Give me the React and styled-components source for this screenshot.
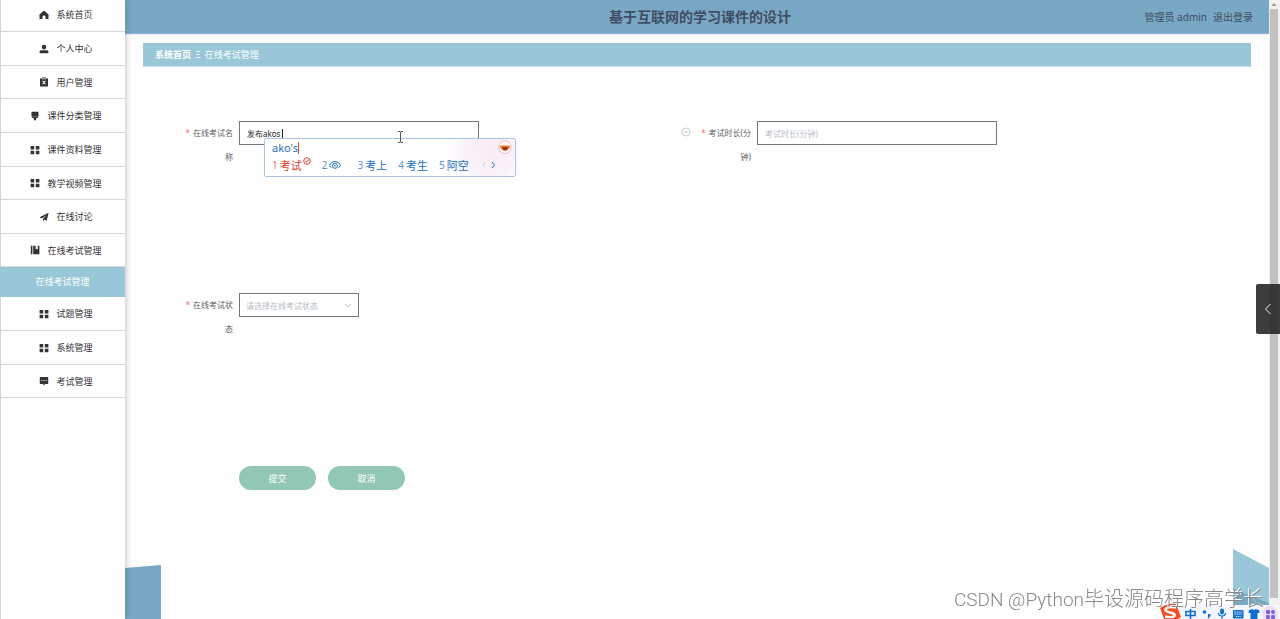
import React, { useState } from 'react';
import styled, { createGlobalStyle } from 'styled-components';

const menuTop = [
  { id: 1, icon: 'home', label: '系统首页' },
  { id: 2, icon: 'user', label: '个人中心' },
  { id: 3, icon: 'clipboard', label: '用户管理' },
  { id: 4, icon: 'brush', label: '课件分类管理' },
  { id: 5, icon: 'grid', label: '课件资料管理' },
  { id: 6, icon: 'grid', label: '教学视频管理' },
  { id: 7, icon: 'plane', label: '在线讨论' },
  { id: 8, icon: 'book', label: '在线考试管理' },
];

const menuBottom = [
  { id: 9, icon: 'grid', label: '试题管理' },
  { id: 10, icon: 'grid', label: '系统管理' },
  { id: 11, icon: 'chat', label: '考试管理' },
];

const iconPaths = {
  home: 'M5 0.8 Q5.600 0.8 6 1.2 L9.5 4.5 V9 H6.5 V6.500 Q6.500 5.500 5 5.500 Q3.500 5.500 3.500 6.500 V9 H0.5 V4.5 L4 1.2 Q4.400 0.8 5 0.8 Z',
  user: 'M5 0.8 a2.3 2.3 0 0 1 0 4.6 a2.3 2.3 0 0 1 0 -4.6 Z M0.6 9.2 V7.6 Q0.6 6.2 2.2 6.2 H7.8 Q9.4 6.2 9.4 7.6 V9.2 Z',
  clipboard: 'M1 1.5 H3 V0.5 H7 V1.5 H9 V9.5 H1 Z M3 2.2 H7 V1.4 H3 Z M3.2 4.2 L4.4 5.5 L3.2 6.9 L3.9 7.5 L5 6.2 L6.1 7.5 L6.8 6.9 L5.6 5.5 L6.8 4.2 L6.1 3.6 L5 4.8 L3.9 3.6 Z',
  brush: 'M1.5 0.8 H8.5 V5.2 H1.5 Z M1.5 5.6 H8.5 L7.6 7 H6.2 V9.3 H3.8 V7 H2.4 Z',
  grid: 'M0.6 1 H4.2 V4.4 H0.6 Z M5.8 1 H9.4 V4.4 H5.8 Z M0.6 5.8 H4.2 V9.2 H0.6 Z M5.8 5.8 H9.4 V9.2 H5.8 Z',
  plane: 'M9.6 0.8 L0.5 5.3 L3 6.4 L7.6 3 L4 6.9 V9.4 L5.4 7.6 L7.7 8.7 Z',
  book: 'M0.8 0.8 H2.4 V9.2 H0.8 Z M3.2 0.8 H5.6 V4.6 L6.7 3.7 L7.8 4.6 V0.8 H9.4 V9.2 H3.2 Z',
  chat: 'M0.8 1 H9.2 V8 H6 L5 9.4 L4 8 H0.8 Z M2.4 4 V5 H3.4 V4 Z M4.5 4 V5 H5.5 V4 Z M6.6 4 V5 H7.6 V4 Z',
};

const candidates = ['考上', '考生', '阿空'];

const MenuIcon = ({ name }) => (
  <Glyph viewBox="0 0 10 10" aria-hidden="true">
    <path d={iconPaths[name]} fillRule="evenodd" />
  </Glyph>
);

const Menu = ({ items }) => (
  <MenuList>
    {items.map((item) => (
      <li key={item.id}>
        <MenuLink href="#">
          <MenuIcon name={item.icon} />
          {item.label}
        </MenuLink>
      </li>
    ))}
  </MenuList>
);

const ImePanel = () => (
  <ImeBox>
    <ImeTyped>ako's<ImeCaret /></ImeTyped>
    <Mascot viewBox="0 0 14 14" aria-hidden="true">
      <path d="M7 0.6 Q10 0.6 11.5 3.4 Q13.4 5 13 8 Q12.2 13.4 7 13.4 Q1.8 13.4 1 8 Q0.6 5 2.5 3.4 Q4 0.6 7 0.6 Z" fill="#fff" stroke="#e3a9ad" strokeWidth="0.8" />
      <path d="M2.2 5.6 H11.8 V7.6 Q11.8 8.6 10.4 9 Q9.4 11 7 11 Q4.600 11 3.6 9 Q2.2 8.6 2.2 7.6 Z" fill="#ee7a22" />
      <path d="M4.6 7.2 H9.4 V8.4 Q9.4 9.8 7 9.8 Q4.6 9.8 4.6 8.4 Z" fill="#6b2c22" />
    </Mascot>
    <ImeList>
      <Candidate $first>
        <small>1</small>考试
        <Tick viewBox="0 0 8 8" aria-hidden="true">
          <circle cx="4" cy="4" r="3.3" />
          <path d="M2.4 4 L3.7 5.3 L5.8 2.7" />
        </Tick>
      </Candidate>
      <Candidate $wide>
        <small>2</small>
        <Eye viewBox="0 0 12 10" aria-hidden="true">
          <path d="M2.6 7.4 Q0.6 6.6 0.6 5.2 Q2.4 1.4 6 1.4 Q9.6 1.4 11.4 5.2 Q11.4 6.6 9.4 7.4" />
          <circle cx="6" cy="5.8" r="2.5" />
          <circle cx="6" cy="5.8" r="0.4" />
        </Eye>
      </Candidate>
      {candidates.map((word, i) => (
        <Candidate key={word}><small>{i + 3}</small>{word}</Candidate>
      ))}
      <Pager viewBox="0 0 14 8" aria-hidden="true">
        <path d="M3 1.5 L1 4 L3 6.5" stroke="#c9d6e4" />
        <path d="M10 1 L12.5 4 L10 7" stroke="#2a6fb5" />
      </Pager>
    </ImeList>
  </ImeBox>
);

const App = () => {
  const [name, setName] = useState('发布akos');
  const [duration, setDuration] = useState('');

  return (
    <Page>
      <GlobalStyle />
      <Sidebar>
        <Menu items={menuTop} />
        <ActiveLink href="#">在线考试管理</ActiveLink>
        <Menu items={menuBottom} />
      </Sidebar>

      <Main>
        <Header>
          <Title>基于互联网的学习课件的设计</Title>
          <Account>
            <span>管理员 admin</span>
            <a href="#">退出登录</a>
          </Account>
        </Header>

        <Content>
          <Breadcrumb>
            <a href="#">系统首页</a>
            <span>Ξ</span>
            <span>在线考试管理</span>
          </Breadcrumb>

          <Form onSubmit={(e) => e.preventDefault()}>
            <Field>
              <Label htmlFor="exam-name">在线考试名称</Label>
              <Control>
                <Input id="exam-name" value={name} onChange={(e) => setName(e.target.value)} />
                <TextCaret />
                <Beam viewBox="0 0 7 12" aria-hidden="true">
                  <path d="M1 0.5 H3 L3.5 1 L4 0.5 H6 M3.5 1 V11 M1 11.5 H3 L3.5 11 L4 11.5 H6" />
                </Beam>
                <ImePanel />
              </Control>
              <ClearIcon viewBox="0 0 10 10" aria-hidden="true">
                <circle cx="5" cy="5" r="4" />
                <path d="M3.6 3.6 L6.4 6.4 M6.4 3.6 L3.6 6.4" />
              </ClearIcon>
            </Field>
            <Field>
              <Label htmlFor="exam-time">考试时长(分钟)</Label>
              <Control>
                <Input
                  id="exam-time"
                  placeholder="考试时长(分钟)"
                  value={duration}
                  onChange={(e) => setDuration(e.target.value)}
                />
              </Control>
            </Field>
            <Field $full>
              <Label htmlFor="exam-state">在线考试状态</Label>
              <SelectBox>
                <Select id="exam-state" defaultValue="">
                  <option value="">请选择在线考试状态</option>
                </Select>
                <Arrow viewBox="0 0 8 5" aria-hidden="true">
                  <path d="M0.8 0.8 L4 4 L7.2 0.8" />
                </Arrow>
              </SelectBox>
            </Field>
            <Actions>
              <Button type="submit">提交</Button>
              <Button type="button">取消</Button>
            </Actions>
          </Form>
        </Content>

        <LeftShape viewBox="0 0 36 54" aria-hidden="true">
          <path d="M0 3 L36 0 V54 H0 Z" fill="#78a8c3" />
        </LeftShape>
        <RightShape viewBox="0 0 36 60" aria-hidden="true">
          <path d="M0 0 L36 19 V60 H0 Z" fill="#99c7d7" />
          <path d="M0 40 L36 54 V60 H0 Z" fill="#78a8c3" />
        </RightShape>
      </Main>

      <Scrollbar>
        <ScrollArrow viewBox="0 0 8 9" aria-hidden="true">
          <path d="M1.5 6 L4 3 L6.5 6 Z" />
        </ScrollArrow>
        <Thumb />
      </Scrollbar>

      <Drawer type="button" aria-label="展开">
        <svg viewBox="0 0 8 12" aria-hidden="true">
          <path d="M6.5 1 L1.5 6 L6.5 11" />
        </svg>
      </Drawer>

      <Tray>
        <svg viewBox="0 0 120 16" aria-hidden="true">
          <rect x="18" y="2" width="102" height="14" fill="#f3f6fc" />
          <circle cx="110" cy="11" r="8" fill="#f0dcf3" />
          <path d="M0 5 Q8 0 16 1 L21 14 L18 16 H4 Z" fill="#f04e23" />
          <path d="M16 4.5 Q9 3 6 5.5 Q4 8 9 9.2 Q16 10.5 14.5 13 Q12 15 5 13.5" fill="none" stroke="#fff" strokeWidth="2.4" />
          <g fill="none" stroke="#0f6fd0" strokeWidth="1.6">
            <path d="M26 8.5 H35 V12.5 H26 Z M30.5 6 V16" />
            <path d="M58.500 10 Q58.500 13 62 13 Q65.500 13 65.500 10 M62 13 V16" strokeWidth="1.2" />
          </g>
          <g fill="#0f6fd0">
            <circle cx="44.500" cy="9" r="1.800" />
            <path d="M48 11 H50.500 V13 L48.500 15.500 H47.500 L48.500 13.500 H48 Z" />
            <rect x="60" y="5.500" width="4" height="6" rx="2" />
            <rect x="73" y="7" width="10.500" height="8.500" rx="1" />
            <path d="M89 7 L92.500 6 Q94 8 95.500 6 L99 7 L99.500 10 H97.500 V16 H90.500 V10 H88.500 Z" />
          </g>
          <path d="M74.500 9 H82 M74.500 11 H82 M76 13.500 H80.500" stroke="#fff" strokeDasharray="1.2 0.8" />
          <g fill="#7b63d8">
            <rect x="106" y="7" width="4" height="4" rx="1" />
            <rect x="111" y="7" width="4" height="4" rx="2" />
            <rect x="106" y="12" width="4" height="4" rx="1" />
            <rect x="111" y="12" width="4" height="4" rx="1" />
          </g>
        </svg>
      </Tray>
      <Watermark><span>CSDN @Python</span>毕设源码程序高学长</Watermark>
    </Page>
  );
};

const GlobalStyle = createGlobalStyle`
  * {
    box-sizing: border-box;
  }
  body {
    margin: 0;
    background: #fefefe;
    font-family: "Noto Sans", "Noto Sans CJK SC", sans-serif;
    font-size: 9px;
    color: #333;
  }
  a {
    color: inherit;
    text-decoration: none;
  }
  input, select, button {
    font-family: inherit;
    font-size: inherit;
    margin: 0;
  }
`;

const Page = styled.div`
  display: flex;
  min-height: 100vh;
  overflow: hidden;
`;

const Sidebar = styled.nav`
  flex: 0 0 125px;
  /* menu is scrolled by a hair */
  margin-top: -2px;
  border-left: 1px solid #d4d4d4;
  background: #fff;
  box-shadow: 1px 0 6px rgba(60, 60, 80, 0.3);
  z-index: 1;
`;

const MenuList = styled.ul`
  display: grid;
  margin: 0;
  padding: 0;
  list-style: none;

  li {
    height: 34px;
    border-bottom: 1px solid #d6d6d6;
  }
  li:nth-child(3n), li:last-child {
    height: 33px;
  }
`;

const MenuLink = styled.a`
  display: flex;
  align-items: center;
  justify-content: center;
  gap: 7px;
  height: 100%;
  padding-left: 6px;
`;

const Glyph = styled.svg`
  width: 10px;
  height: 10px;
  fill: #333;
`;

const ActiveLink = styled.a`
  display: block;
  margin-left: -1px;
  background: #99c7d7;
  color: #fff;
  line-height: 30px;
  text-align: center;
`;

const Main = styled.main`
  position: relative;
  flex: 1;
  min-width: 0;
`;

const Header = styled.header`
  display: grid;
  grid-template-columns: 1fr auto 1fr;
  align-items: center;
  height: 34px;
  padding: 0 16px 0 22px;
  background: #78a8c3;
  border-bottom: 1px solid #8fb0d6;
  box-shadow: 0 1px 2px rgba(150, 150, 200, 0.2);
  color: #3f4c66;
`;

const Title = styled.h1`
  grid-column: 2;
  margin: 0;
  font-size: 14px;
  line-height: 32px;
`;

const Account = styled.div`
  display: flex;
  justify-content: flex-end;
  gap: 6px;
  font-size: 10px;
`;

const Content = styled.div`
  padding: 9px 18px 0;
`;

const Breadcrumb = styled.nav`
  display: flex;
  align-items: center;
  gap: 4px;
  height: 24px;
  padding: 0 12px;
  background: #99c7d7;
  border-bottom: 1px solid #c3dde6;
  color: #fff;

  a {
    font-weight: bold;
  }
`;

const Form = styled.form`
  display: grid;
  grid-template-columns: 1fr 1fr;
  padding: 54px 36px 0;
`;

const Field = styled.div`
  display: flex;
  align-items: flex-start;
  min-height: 172px;
  grid-column: ${(props) => (props.$full ? '1 / -1' : 'auto')};
`;

const Label = styled.label`
  flex: 0 0 60px;
  padding-right: 6px;
  line-height: 24px;
  font-size: 8px;
  text-align: right;
  color: #606266;
  word-break: break-all;

  &::before {
    content: '*';
    margin-right: 3px;
    color: #f56c6c;
  }
`;

const Control = styled.div`
  position: relative;
  flex: 0 1 240px;
`;

const Input = styled.input`
  display: block;
  width: 100%;
  height: 24px;
  padding: 0 7px;
  border: 1px solid #777;
  background: #fff;
  color: #222;
  outline: none;
  font-size: 8px;

  &::placeholder {
    color: #b8bcc6;
  }
`;

const TextCaret = styled.i`
  position: absolute;
  top: 8px;
  left: 43px;
  width: 1px;
  height: 9px;
  background: #222;
`;

const Beam = styled.svg`
  position: absolute;
  top: 10px;
  left: 158px;
  z-index: 3;
  width: 7px;
  height: 12px;
  fill: none;
  stroke: #555;
`;

const ImeBox = styled.div`
  position: absolute;
  top: 17px;
  left: 25px;
  z-index: 2;
  width: 252px;
  padding: 0 7px 2px;
  border: 1px solid #a9c5e2;
  border-radius: 2px;
  background: radial-gradient(circle 44px at 90% 30%, #fbeaf2 0, #f9f3fc 60%, #fff 100%);
  color: #1f6fb8;
  font-size: 11px;
`;

const ImeTyped = styled.div`
  display: flex;
  align-items: center;
  height: 17px;
`;

const ImeCaret = styled.i`
  width: 1px;
  height: 12px;
  background: #d9534a;
`;

const Mascot = styled.svg`
  position: absolute;
  top: 1px;
  right: 3px;
  width: 14px;
  height: 14px;
`;

const ImeList = styled.div`
  display: flex;
  align-items: center;
  gap: 11px;
  height: 18px;
`;

const Candidate = styled.span`
  display: flex;
  align-items: center;
  gap: 2px;
  margin-right: ${(props) => (props.$wide ? '5px' : '0')};
  color: ${(props) => (props.$first ? '#d8432f' : '#1f6fb8')};

  small {
    font-size: 10px;
    opacity: 0.75;
  }
`;

const Tick = styled.svg`
  align-self: flex-start;
  width: 8px;
  height: 8px;
  margin-left: -1px;
  fill: none;
  stroke: #d8432f;
`;

const Eye = styled.svg`
  width: 12px;
  height: 10px;
  fill: none;
  stroke: #1f6fb8;
`;

const Pager = styled.svg`
  width: 14px;
  height: 8px;
  margin-left: 2px;
  fill: none;
`;

const ClearIcon = styled.svg`
  width: 10px;
  height: 10px;
  margin: 6px 6px 0 auto;
  fill: none;
  stroke: #c0c4cc;
  stroke-width: 0.8;
`;

const SelectBox = styled.div`
  position: relative;
  flex: 0 0 120px;
`;

const Select = styled.select`
  display: block;
  width: 100%;
  height: 24px;
  padding: 0 6px;
  appearance: none;
  border: 1px solid #777;
  border-radius: 0;
  background: #fff;
  color: #b8bcc6;
  font-size: 8px;
`;

const Arrow = styled.svg`
  position: absolute;
  top: 10px;
  right: 7px;
  width: 8px;
  height: 5px;
  fill: none;
  stroke: #b8bcc6;
  pointer-events: none;
`;

const Actions = styled.div`
  grid-column: 1 / -1;
  display: flex;
  gap: 12px;
  padding: 1px 0 0 60px;
`;

const Button = styled.button`
  width: 77px;
  height: 24px;
  padding: 0;
  border: none;
  border-radius: 12px;
  background: #93c7b5;
  color: #fff;
`;

const LeftShape = styled.svg`
  position: absolute;
  bottom: 0;
  left: 0;
  width: 36px;
  height: 54px;
`;

const RightShape = styled.svg`
  position: absolute;
  right: 0;
  bottom: 10px;
  width: 36px;
  height: 60px;
`;

const Scrollbar = styled.div`
  display: flex;
  flex-direction: column;
  flex: 0 0 11px;
  padding: 0 2px 21px 1px;
  background: #f1f1f1;
`;

const ScrollArrow = styled.svg`
  width: 8px;
  height: 9px;
  fill: #999;
`;

const Thumb = styled.div`
  flex: 1;
  background: #c1c1c1;
`;

const Drawer = styled.button`
  position: fixed;
  top: 284px;
  right: 0;
  z-index: 3;
  display: flex;
  align-items: center;
  justify-content: center;
  width: 24px;
  height: 50px;
  padding: 0;
  border: none;
  border-radius: 2px 0 0 2px;
  background: rgba(40, 40, 40, 0.9);

  svg {
    width: 8px;
    height: 12px;
    fill: none;
    stroke: #eee;
  }
`;

const Tray = styled.div`
  position: fixed;
  right: 0;
  bottom: 0;
  z-index: 3;

  svg {
    display: block;
    width: 120px;
    height: 16px;
  }
`;

const Watermark = styled.div`
  position: fixed;
  right: 16px;
  bottom: 4px;
  z-index: 4;
  font-family: Roboto, "Noto Sans CJK SC", sans-serif;
  font-size: 20px;
  font-weight: 300;
  line-height: 30px;
  color: #888;
  text-shadow: -1px -1px 0 #fff;
  white-space: nowrap;

  span {
    font-size: 19px;
  }
`;

export default App;
